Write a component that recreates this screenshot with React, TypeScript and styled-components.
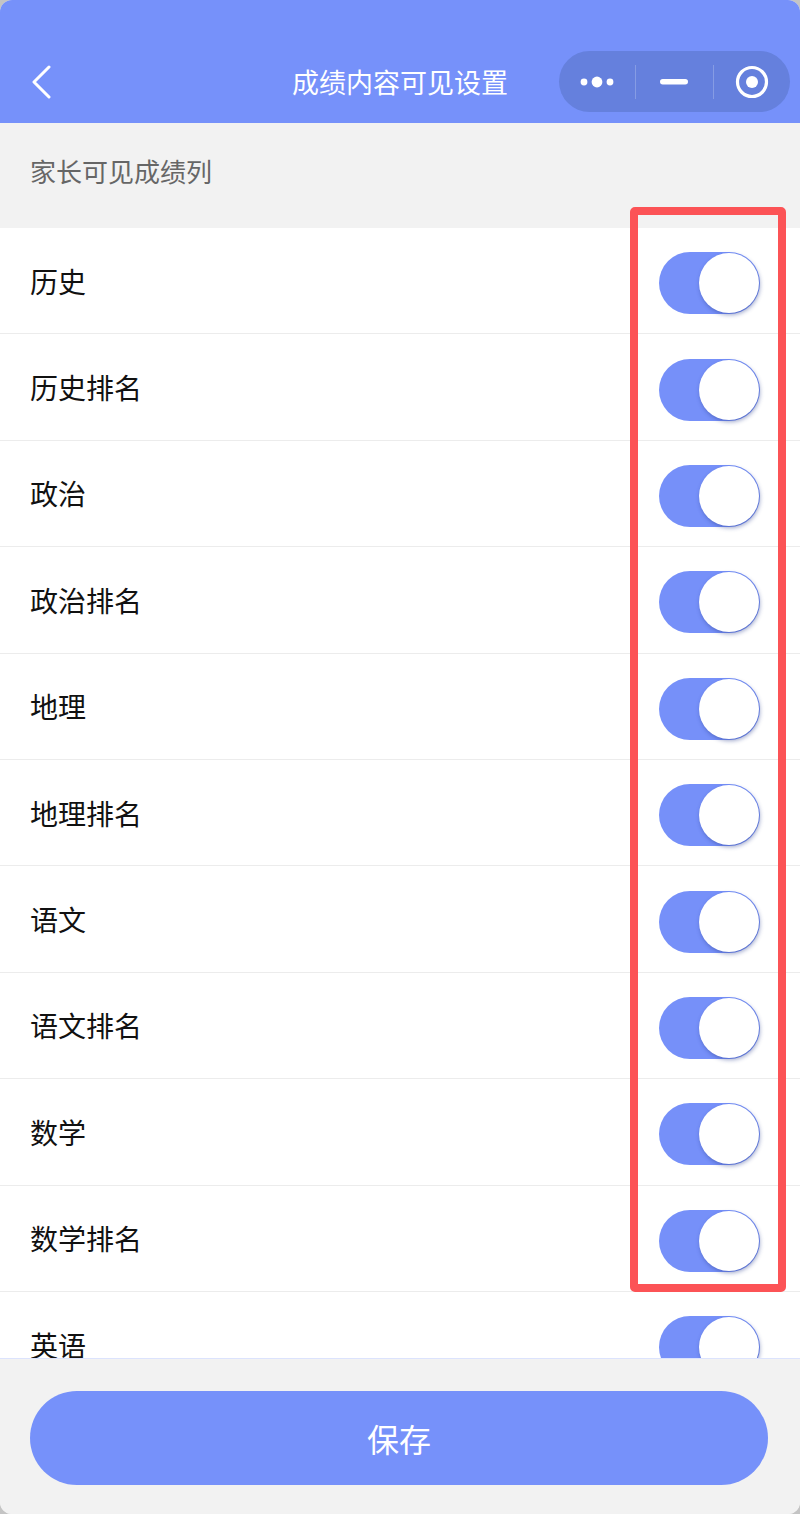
import React, { ReactElement } from 'react'
import styled, { createGlobalStyle } from 'styled-components'

const GlobalStyle = createGlobalStyle`
    html, body {
        margin: 0;
        padding: 0;
        background: #c4c4c4;
    }
    * {
        box-sizing: border-box;
    }
`

const Page = styled.div`
    width: 800px;
    height: 1514px;
    display: flex;
    flex-direction: column;
    position: relative;
    overflow: hidden;
    border-radius: 12px;
    background: #f2f2f2;
    font-family: 'Noto Sans CJK SC', 'Noto Sans', sans-serif;
`

const Header = styled.div`
    height: 123px;
    padding: 51px 10px 11px 10px;
    background: #7691fa;
    display: grid;
    grid-template-columns: 1fr auto 1fr;
    align-items: center;
`

const BackButton = styled.div`
    display: flex;
    align-items: center;
    padding-left: 20px;
`

const Title = styled.div`
    color: #ffffff;
    font-size: 27px;
    line-height: 40px;
`

const Capsule = styled.div`
    justify-self: end;
    width: 231px;
    height: 61px;
    border-radius: 31px;
    background: #6580dd;
    display: flex;
    align-items: center;
`

const CapsuleItem = styled.div`
    flex: 1;
    height: 100%;
    display: flex;
    align-items: center;
    justify-content: center;
`

const CapsuleDivider = styled.div`
    width: 1px;
    height: 34px;
    background: rgba(255, 255, 255, 0.22);
`

const SectionLabel = styled.div`
    height: 105px;
    padding: 0 0 10px 30px;
    display: flex;
    align-items: center;
    font-size: 26px;
    color: #666666;
`

const List = styled.div`
    flex: 1;
    overflow: hidden;
    background: #ffffff;
`

const Row = styled.div`
    height: 106.4px;
    padding: 0 40px 0 30px;
    display: flex;
    align-items: center;
    justify-content: space-between;
    border-bottom: 1px solid #ececec;
`

const RowLabel = styled.span`
    font-size: 28px;
    color: #111111;
`

const Switch = styled.div<{ $on: boolean }>`
    width: 101px;
    height: 62px;
    margin-top: 5px;
    border-radius: 31px;
    background: ${(p) => (p.$on ? '#7690f9' : '#e5e5e5')};
    position: relative;
    flex-shrink: 0;
`

const Knob = styled.div<{ $on: boolean }>`
    position: absolute;
    top: 1px;
    left: ${(p) => (p.$on ? '40px' : '1px')};
    width: 60px;
    height: 60px;
    border-radius: 50%;
    background: #ffffff;
    box-shadow: 1px 2px 4px rgba(40, 60, 140, 0.45);
`

const Footer = styled.div`
    height: 156px;
    padding: 32px 32px 30px 30px;
    border-top: 1px solid #dce3fd;
    background: #f2f2f2;
`

const SaveButton = styled.button`
    width: 100%;
    height: 94px;
    border: none;
    border-radius: 47px;
    background: #7691fa;
    color: #ffffff;
    font-family: inherit;
    font-size: 32px;
    cursor: pointer;
`

const Highlight = styled.div`
    position: absolute;
    left: 630px;
    top: 207px;
    width: 156px;
    height: 1085px;
    border: 8px solid #fc5356;
    border-radius: 5px;
    pointer-events: none;
`

const subjects = [
    '历史',
    '历史排名',
    '政治',
    '政治排名',
    '地理',
    '地理排名',
    '语文',
    '语文排名',
    '数学',
    '数学排名',
    '英语',
    '英语排名',
]

export default function App(): ReactElement {
    return (
        <Page>
            <GlobalStyle />
            <Header>
                <BackButton>
                    <svg width="22" height="34" viewBox="0 0 22 34">
                        <path d="M19 2 L4 17 L19 32" fill="none" stroke="#fff" strokeWidth="3" strokeLinecap="round" strokeLinejoin="round" />
                    </svg>
                </BackButton>
                <Title>成绩内容可见设置</Title>
                <Capsule>
                    <CapsuleItem>
                        <svg width="36" height="14" viewBox="0 0 36 14">
                            <circle cx="5" cy="7" r="3.4" fill="#fff" />
                            <circle cx="18" cy="7" r="5.4" fill="#fff" />
                            <circle cx="31" cy="7" r="3.4" fill="#fff" />
                        </svg>
                    </CapsuleItem>
                    <CapsuleDivider />
                    <CapsuleItem>
                        <svg width="28" height="8" viewBox="0 0 28 8">
                            <rect x="0" y="1" width="28" height="5.5" rx="2.75" fill="#fff" />
                        </svg>
                    </CapsuleItem>
                    <CapsuleDivider />
                    <CapsuleItem>
                        <svg width="34" height="34" viewBox="0 0 34 34">
                            <circle cx="17" cy="17" r="14.5" fill="none" stroke="#fff" strokeWidth="3.2" />
                            <circle cx="17" cy="17" r="6" fill="#fff" />
                        </svg>
                    </CapsuleItem>
                </Capsule>
            </Header>
            <SectionLabel>家长可见成绩列</SectionLabel>
            <List>
                {subjects.map((name) => (
                    <Row key={name}>
                        <RowLabel>{name}</RowLabel>
                        <Switch $on>
                            <Knob $on />
                        </Switch>
                    </Row>
                ))}
            </List>
            <Footer>
                <SaveButton>保存</SaveButton>
            </Footer>
            <Highlight />
        </Page>
    )
}
